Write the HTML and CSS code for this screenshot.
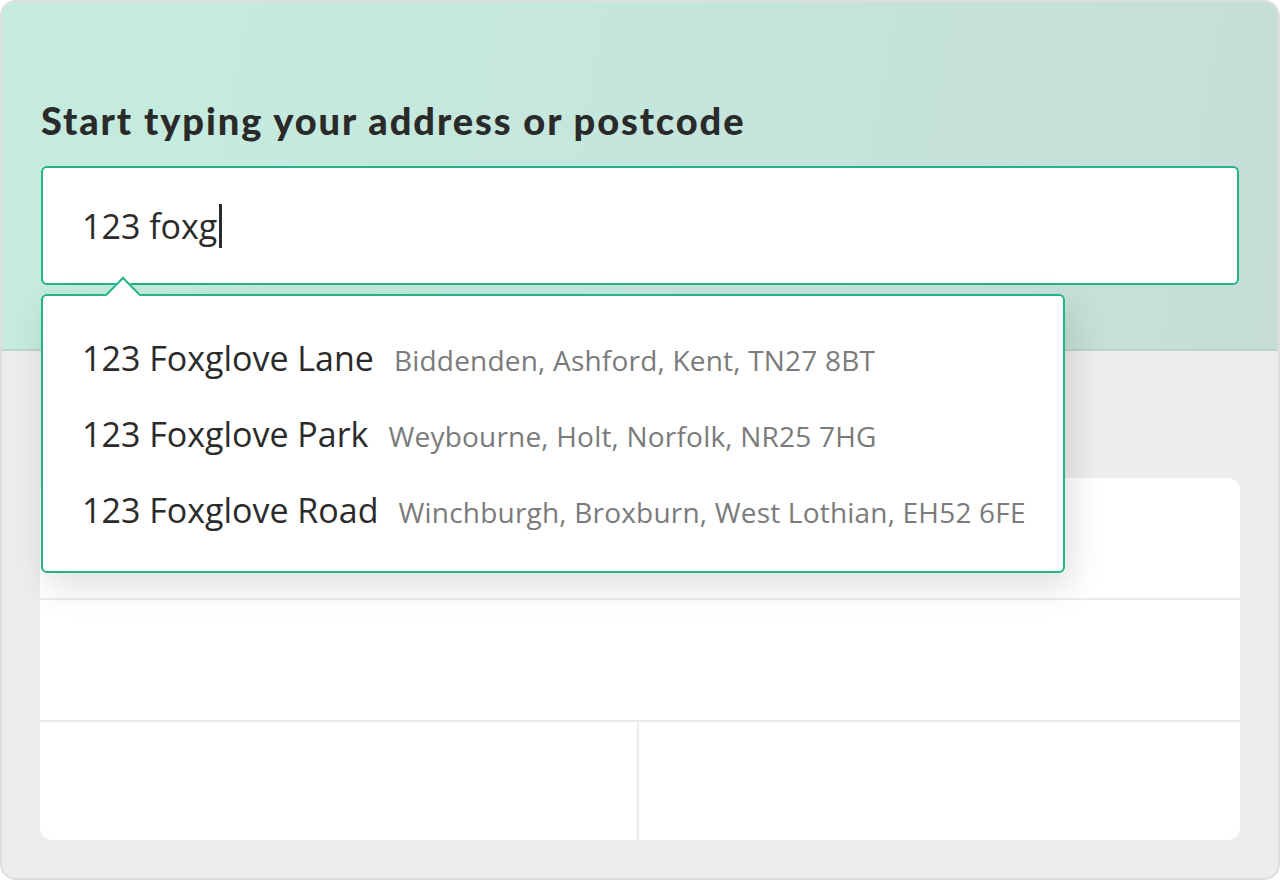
FILE: index.html
```html
<!DOCTYPE html>
<html lang="en">
<head>
<meta charset="utf-8">
<title>Address lookup</title>
<link rel="stylesheet" href="styles.css">
</head>
<body>
<div class="frame">
  <section class="hero">
    <h1 class="title">Start typing your address or postcode</h1>
    <div class="field">
      <span class="value">123 foxg</span><span class="caret"></span>
      <div class="dropdown">
        <div class="item"><span class="main">123 Foxglove Lane</span><span class="sub">Biddenden, Ashford, Kent, TN27 8BT</span></div>
        <div class="item"><span class="main">123 Foxglove Park</span><span class="sub">Weybourne, Holt, Norfolk, NR25 7HG</span></div>
        <div class="item"><span class="main">123 Foxglove Road</span><span class="sub">Winchburgh, Broxburn, West Lothian, EH52 6FE</span></div>
      </div>
    </div>
  </section>
  <section class="content">
    <div class="card">
      <div class="row"></div>
      <div class="row"></div>
      <div class="row split"><div class="cell"></div><div class="cell"></div></div>
    </div>
  </section>
</div>
</body>
</html>
```
FILE: styles.css
```css
* { box-sizing: border-box; }
html, body { margin: 0; padding: 0; }
body { width: 1280px; height: 880px; background: #ffffff; font-family: "Open Sans", "Noto Sans", sans-serif; }

.frame {
  width: 1280px;
  height: 880px;
  border: 2px solid #dedede;
  border-radius: 16px;
  overflow: hidden;
  background: #ededed;
  display: flex;
  flex-direction: column;
}

.hero {
  height: 349px;
  flex: none;
  background: linear-gradient(100deg, #c5ecdf 0%, #c5e5dc 55%, #c6ddd7 100%);
  border-bottom: 2px solid #bdd3cc;
  padding: 95px 39px 0 39px;
}

.title {
  margin: 0 0 23px 0;
  font-family: "Lato", sans-serif;
  font-weight: 900;
  font-size: 38px;
  line-height: 46px;
  color: #2a2a2a;
  letter-spacing: 1.9px;
}

.field {
  position: relative;
  height: 119px;
  background: #ffffff;
  border: 2px solid #22b389;
  border-radius: 6px;
  padding: 0 0 0 39px;
  display: flex;
  align-items: center;
  font-size: 34px;
  color: #2b2b2b;
}

.value { line-height: 46px; }

.caret {
  display: inline-block;
  width: 3px;
  height: 44px;
  background: #2b2b2b;
  margin-left: 2px;
}

.dropdown {
  position: absolute;
  left: -2px;
  top: 126px;
  width: 1024px;
  height: 279px;
  background: #ffffff;
  border: 2px solid #22b389;
  border-radius: 6px;
  padding: 24px 0 0 39px;
  box-shadow: 6px 14px 34px rgba(0, 0, 0, 0.13);
  z-index: 2;
}

.dropdown::before {
  content: "";
  position: absolute;
  left: 67px;
  top: -14px;
  width: 24px;
  height: 24px;
  background: #ffffff;
  border-top: 2px solid #22b389;
  border-left: 2px solid #22b389;
  transform: rotate(45deg);
}

.item {
  height: 76px;
  line-height: 76px;
  white-space: nowrap;
}

.main {
  font-size: 34px;
  color: #2b2b2b;
}

.sub {
  font-size: 28px;
  color: #7b7b7b;
  margin-left: 20px;
  letter-spacing: 0.2px;
}

.content {
  flex: 1;
  padding: 127px 38px 38px 38px;
}

.card {
  height: 362px;
  background: #ffffff;
  border-radius: 12px;
  display: flex;
  flex-direction: column;
  overflow: hidden;
}

.row {
  height: 122px;
  border-bottom: 2px solid #ebebeb;
  flex: none;
}

.row.split {
  border-bottom: none;
  flex: 1;
  display: grid;
  grid-template-columns: 599px 1fr;
}

.cell:first-child { border-right: 2px solid #ebebeb; }
```
